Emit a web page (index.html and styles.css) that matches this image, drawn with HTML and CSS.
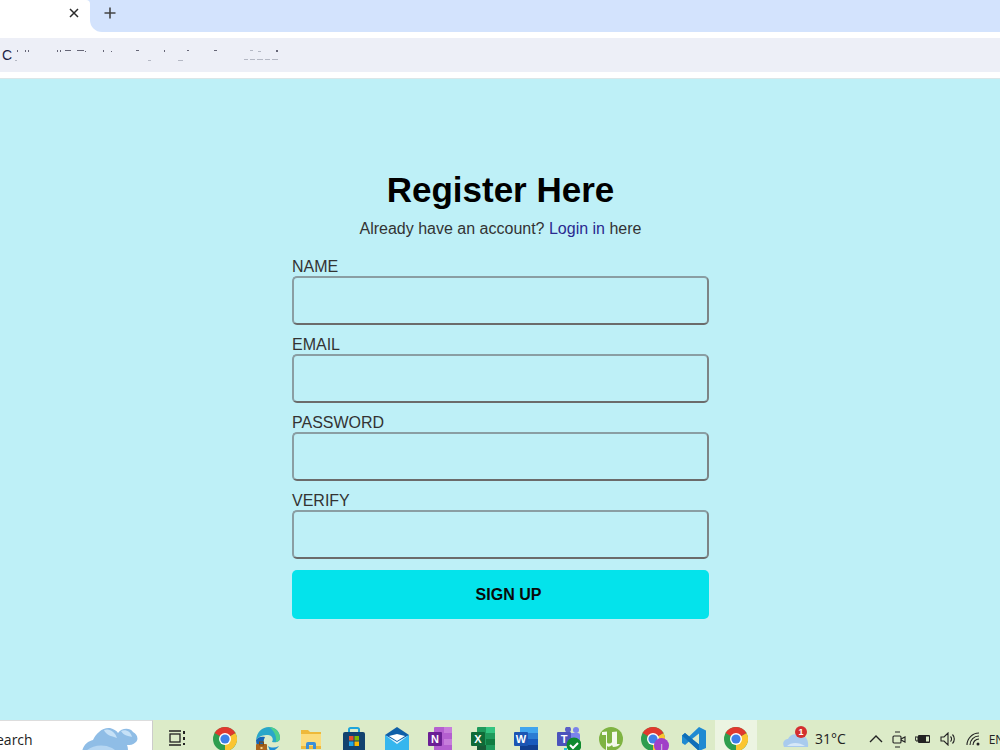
FILE: index.html
```html
<!DOCTYPE html>
<html lang="en">
<head>
    <meta charset="UTF-8">
    <meta name="viewport" content="width=device-width, initial-scale=1.0">
    <title>Register Here</title>
    <link rel="stylesheet" href="styles.css">
</head>
<body>

<div class="tabbar">
    <div class="tab">
        <svg class="tab-close" width="10" height="10" viewBox="0 0 10 10"><path d="M1 1l8 8M9 1l-8 8" stroke="#2a2a2a" stroke-width="1.5"/></svg>
    </div>
    <div class="tab-rest">
        <svg class="tab-plus" width="12" height="12" viewBox="0 0 12 12"><path d="M6 0.5v11M0.5 6h11" stroke="#444" stroke-width="1.6"/></svg>
    </div>
</div>

<div class="addressbar">
    <span class="address-text">C</span>
    <svg class="address-marks" width="272" height="14" viewBox="0 0 272 14">
        <g fill="#667">
            <rect x="8" y="1" width="1" height="2"/><rect x="16" y="1" width="1" height="2"/><rect x="19" y="1" width="1" height="2"/>
            <rect x="48" y="1" width="1" height="2"/><rect x="51" y="1" width="1" height="2"/>
            <rect x="56" y="1" width="6" height="1"/><rect x="68" y="1" width="7" height="1"/><rect x="76" y="2" width="1" height="1"/>
            <rect x="94" y="1" width="1" height="2"/><rect x="102" y="2" width="1" height="1"/>
            <rect x="127" y="1" width="3" height="1"/><rect x="155" y="1" width="1" height="2"/>
            <rect x="178" y="1" width="2" height="1"/><rect x="205" y="1" width="3" height="1"/><rect x="267" y="1" width="2" height="2"/>
        </g>
        <g fill="#b4b8c4">
            <rect x="6" y="11" width="2" height="1"/><rect x="139" y="11" width="3" height="1"/><rect x="169" y="11" width="5" height="1"/>
            <rect x="241" y="1" width="3" height="1"/><rect x="249" y="2" width="3" height="1"/>
            <path d="M235 10h4v1h-4zM241 10h5v1h-5zM248 10h6v1h-6zM256 10h5v1h-5zM263 10h6v1h-6z"/>
        </g>
    </svg>
</div>

<main class="page">
    <form class="register-form">
        <h1>Register Here</h1>
        <p class="subtitle">Already have an account? <a href="#">Login in</a> here</p>

        <label for="name">NAME</label>
        <input type="text" id="name">

        <label for="email">EMAIL</label>
        <input type="text" id="email">

        <label for="password">PASSWORD</label>
        <input type="password" id="password">

        <label for="verify">VERIFY</label>
        <input type="password" id="verify">

        <button type="button" class="signup">SIGN UP</button>
    </form>
</main>

<footer class="taskbar">
    <svg width="0" height="0" class="defs">
        <symbol id="chrome" viewBox="0 0 24 24">
            <circle cx="12" cy="12" r="12" fill="#2f9e4f"/>
            <path d="M12 12L22.4 6A12 12 0 0 1 12 24z" fill="#fbc531"/>
            <path d="M12 12L1.6 6A12 12 0 0 1 22.4 6z" fill="#e0382e"/>
            <circle cx="12" cy="12" r="6" fill="#fff"/>
            <circle cx="12" cy="12" r="4.6" fill="#3f7fe8"/>
        </symbol>
    </svg>

    <div class="search">
        <span class="search-text">earch</span>
        <svg class="search-cloud" width="56" height="25" viewBox="0 0 56 25">
            <path d="M0 25C1 18 6 14 11 13C14 6 21 0 28 1C32 2 35 4 36 6C39 1 48 0 51 5C55 7 57 12 54 15C51 18 48 18 45 18C46 20 46 23 46 25z" fill="#8fbde6"/>
            <path d="M22 3C28 1 33 5 35 11C29 9 24 8 22 3z" fill="#c6e1f7"/>
            <path d="M39 4C44 2 49 5 50 10C46 9 41 8 39 4z" fill="#c6e1f7"/>
            <path d="M3 25C8 19 20 16 30 21L36 25z" fill="#b5d6f2"/>
        </svg>
    </div>

    <div class="task-icons">
        <div class="task-icon task-view">
            <svg width="18" height="18" viewBox="0 0 18 18" fill="none" stroke="#222" stroke-width="1.3">
                <rect x="2" y="5" width="10" height="8"/>
                <path d="M1 2h12M1 16h12"/>
                <path d="M16 2v3M16 8v3M16 14v2" stroke-width="2"/>
            </svg>
        </div>
        <div class="task-icon"><svg class="icon"><use href="#chrome"/></svg></div>
        <div class="task-icon">
            <svg class="icon" viewBox="0 0 24 24">
                <path d="M0 13C1 5 6 0 13 0C20 0 24 5 24 11C24 15 20 16 16 15C18 12 16 8 12 8C7 8 3 9 0 13z" fill="#2aa7c9"/>
                <path d="M13 0C19 0 24 5 24 11C24 13 22 14.500 20 15C21 10 18 3 13 0z" fill="#4fd08a"/>
                <path d="M0 13C0 19 3 23 8 24L14 24C8 22 6 15 9 10C5 9 2 10 0 13z" fill="#1565b8"/>
                <path d="M14 24C18 24 21 22 23 19C19 21 15 21 12 19z" fill="#1f8fd6"/>
                <rect x="0" y="17" width="11" height="8" rx="1" fill="#a9651f"/>
                <rect x="3.500" y="15" width="4" height="3" fill="none" stroke="#7c4a14"/>
                <rect x="4.500" y="20" width="2" height="2" fill="#f4d58d"/>
            </svg>
        </div>
        <div class="task-icon">
            <svg class="icon folder" viewBox="0 0 20 19">
                <path d="M0 0h7l2 2h11v17H0z" fill="#eeb93a"/>
                <path d="M0 4h20v12H0z" fill="#fbdc7c"/>
                <path d="M5 19v-5a2 2 0 0 1 2-2h6a2 2 0 0 1 2 2v5h-3v-4H8v4z" fill="#3b8fd8"/>
            </svg>
        </div>
        <div class="task-icon">
            <svg class="icon" viewBox="0 0 24 24">
                <path d="M7 5V2.500A1.500 1.500 0 0 1 8.500 1h7A1.500 1.500 0 0 1 17 2.500V5" fill="none" stroke="#1ea5dc" stroke-width="2"/>
                <rect x="1" y="5" width="22" height="20" rx="2" fill="#12426f"/>
                <rect x="7" y="9" width="4.500" height="4.500" fill="#e8502c"/>
                <rect x="12.500" y="9" width="4.500" height="4.500" fill="#7fba00"/>
                <rect x="7" y="14.500" width="4.500" height="4.500" fill="#1ea5e8"/>
                <rect x="12.500" y="14.500" width="4.500" height="4.500" fill="#fbb900"/>
            </svg>
        </div>
        <div class="task-icon">
            <svg class="icon" viewBox="0 0 24 24">
                <path d="M12 0L24 8V25H0V8z" fill="#0f5fa8"/>
                <path d="M0 8L12 15L24 8V25H0z" fill="#35b6ee"/>
                <path d="M4 9L12 7L20 9L12 14z" fill="#fff"/>
                <path d="M0 8L12 15L24 8L12 17z" fill="#dff1fb"/>
            </svg>
        </div>
        <div class="task-icon">
            <svg class="icon" viewBox="0 0 24 24">
                <rect x="6" y="0" width="18" height="25" rx="1" fill="#b45fd0"/>
                <path d="M16 0h8v6h-8zM16 12h8v6h-8z" fill="#c77ddc"/>
                <rect x="0" y="5" width="14" height="14" rx="1" fill="#6b1f95"/>
                <text x="7" y="16" class="icon-letter" text-anchor="middle">N</text>
            </svg>
        </div>
        <div class="task-icon">
            <svg class="icon" viewBox="0 0 24 24">
                <rect x="6" y="0" width="18" height="25" rx="1" fill="#1f9a5c"/>
                <path d="M15 0h9v6h-9z" fill="#33c481"/>
                <path d="M15 12h9v6h-9z" fill="#107c41"/>
                <path d="M6 18h9v7H6z" fill="#185c37"/>
                <rect x="0" y="5" width="14" height="14" rx="1" fill="#0f6b38"/>
                <text x="7" y="16" class="icon-letter" text-anchor="middle">X</text>
            </svg>
        </div>
        <div class="task-icon">
            <svg class="icon" viewBox="0 0 24 24">
                <rect x="6" y="0" width="18" height="25" rx="1" fill="#2b7cd3"/>
                <path d="M6 0h18v6H6z" fill="#41a5ee"/>
                <path d="M6 12h18v6H6z" fill="#185abd"/>
                <path d="M6 18h18v7H6z" fill="#103f91"/>
                <rect x="0" y="5" width="14" height="14" rx="1" fill="#1b55b3"/>
                <text x="7" y="16" class="icon-letter" text-anchor="middle">W</text>
            </svg>
        </div>
        <div class="task-icon">
            <svg class="icon" viewBox="0 0 24 24">
                <circle cx="19" cy="3" r="3" fill="#7b83eb"/>
                <circle cx="11" cy="2.500" r="3" fill="#5b5fc7"/>
                <rect x="10" y="6" width="13" height="12" rx="2" fill="#7b83eb"/>
                <rect x="0" y="5" width="14" height="14" rx="1" fill="#4b53bc"/>
                <text x="7" y="16" class="icon-letter" text-anchor="middle">T</text>
                <circle cx="17" cy="18" r="7.500" fill="#0f8a2e"/>
                <path d="M13 18l3 3 5-5" fill="none" stroke="#fff" stroke-width="2"/>
                <rect x="7" y="21" width="3" height="4" fill="#19c3d6"/>
            </svg>
        </div>
        <div class="task-icon narrow">
            <svg class="icon" viewBox="0 0 24 24">
                <circle cx="12" cy="12" r="12" fill="#7fb342"/>
                <path d="M3 5l5-.500V15c0 2 4 2 5 0V5l5-.500V17l3 0c-1 2-4 3-7 3l-1-2c-2 2-4 2-5 1v5H7V8L3 8z" fill="#f4f9ec"/>
            </svg>
        </div>
        <div class="task-icon narrow">
            <svg class="icon"><use href="#chrome"/></svg>
            <span class="avatar">J</span>
        </div>
        <div class="task-icon narrow">
            <svg class="icon" viewBox="0 0 24 24">
                <path d="M17 0L24 3.500V21L17 24L7 14.500L3 18L0 16V8.500L3 6L7 9.500z" fill="#1f8ad2"/>
                <path d="M17 6.500L10 12L17 17.500z" fill="#dcebc8"/>
                <path d="M0 8.500L3 6L17 17.500V24z" fill="#0f6fb8"/>
            </svg>
        </div>
        <div class="task-icon narrow active"><svg class="icon"><use href="#chrome"/></svg></div>
    </div>

    <div class="weather">
        <svg width="26" height="22" viewBox="0 0 26 22">
            <path d="M1 21C-1 17 1 13 5 13C7 8 13 7 17 10C22 9 26 13 25 21z" fill="#a9cbee"/>
            <path d="M4 20C8 16 16 16 22 20z" fill="#d6e8f8"/>
            <circle cx="18" cy="6" r="6" fill="#d32f2f"/>
            <text x="18" y="9" class="badge-num" text-anchor="middle">1</text>
        </svg>
        <span class="temp">31°C</span>
    </div>

    <div class="tray">
        <svg width="14" height="8" viewBox="0 0 14 8" fill="none" stroke="#222" stroke-width="1.4"><path d="M1 7l6-6 6 6"/></svg>
        <svg width="14" height="18" viewBox="0 0 14 18" fill="none" stroke="#222" stroke-width="1.1">
            <rect x="1" y="6" width="8" height="7" rx="1"/>
            <path d="M9 9l4-2v5l-4-2M3 2h5M3 17h5"/>
        </svg>
        <svg width="16" height="12" viewBox="0 0 16 12">
            <rect x="3" y="2" width="12" height="8" rx="1" fill="#222"/>
            <rect x="11" y="3.500" width="3" height="5" fill="#dcebc8"/>
            <path d="M0 4h3v4H1z" fill="none" stroke="#222"/>
        </svg>
        <svg width="16" height="14" viewBox="0 0 16 14" fill="none" stroke="#222" stroke-width="1.1">
            <path d="M1 5h3l4-4v12L4 9H1zM10.500 4.500a3.500 3.500 0 0 1 0 5M12.500 2.500a6.500 6.500 0 0 1 0 9" />
        </svg>
        <svg class="wifi" width="14" height="14" viewBox="0 0 14 14" fill="none" stroke="#222" stroke-width="1.1">
            <path d="M1 13A12 12 0 0 1 13 1M4 13A9 9 0 0 1 13 4M7 13A6 6 0 0 1 13 7"/>
            <circle cx="12" cy="12" r="1.500" fill="#222" stroke="none"/>
        </svg>
        <span class="lang">EN</span>
    </div>
</footer>

</body>
</html>
```

FILE: styles.css
```css
html, body {
    margin: 0;
    padding: 0;
}
body {
    width: 1000px;
    height: 750px;
    overflow: hidden;
    display: flex;
    flex-direction: column;
    font-family: "Liberation Sans", Arial, sans-serif;
    background: #fff;
    color: #333;
}

/* browser chrome */
.tabbar {
    display: flex;
    height: 32px;
    flex: none;
    background: linear-gradient(#d3e3fd, #d3e3fd) 0 0 / 100% 6px no-repeat, #fff;
}
.tab {
    width: 90px;
    background: #fff;
    border-top-right-radius: 4px;
    display: flex;
    justify-content: flex-end;
}
.tab-close {
    margin: 8px 11px 0 0;
}
.tab-rest {
    flex: 1;
    background: #d3e3fd;
    border-bottom-left-radius: 12px;
    padding: 7px 0 0 14px;
}
.tab-plus {
    display: block;
}
.addressbar {
    height: 34px;
    margin-top: 6px;
    flex: none;
    display: flex;
    align-items: center;
    padding-left: 2px;
    background: #edeff7;
}
.address-text {
    font-size: 14px;
    color: #224;
    line-height: 34px;
}
.address-marks {
    margin: 2px 0 0 -3px;
}

/* page */
.page {
    flex: none;
    height: 642px;
    margin-top: 6px;
    background: #bef0f7;
    border-top: 1px solid #dbe6e8;
    box-sizing: border-box;
}
.register-form {
    width: 417px;
    margin: 0 auto;
    padding-top: 91px;
    padding-left: 1px;
}
h1 {
    margin: 0;
    font-size: 35px;
    line-height: 40px;
    text-align: center;
    color: #000;
}
.subtitle {
    margin: 10px 0 20px;
    font-size: 16px;
    line-height: 18px;
    text-align: center;
}
.subtitle a {
    color: #2a2a90;
    text-decoration: none;
}
label {
    display: block;
    font-size: 16px;
    line-height: 18px;
}
input {
    display: block;
    width: 100%;
    height: 49px;
    box-sizing: border-box;
    margin: 0 0 11px;
    background: transparent;
    border: 2px solid #8a9ea3;
    border-bottom-color: #6b6b6b;
    border-right-color: #7d8486;
    border-radius: 5px;
}
.signup {
    display: block;
    width: 100%;
    height: 49px;
    padding-left: 22px;
    border: 0;
    border-radius: 5px;
    background: #04e3eb;
    color: #0a0a0a;
    font-family: inherit;
    font-size: 16px;
    font-weight: bold;
}

/* windows taskbar */
.taskbar {
    flex: none;
    height: 30px;
    display: flex;
    background: #dcebc8;
    overflow: hidden;
    font-family: "Open Sans", sans-serif;
}
.defs {
    position: absolute;
}
.search {
    width: 153px;
    flex: none;
    display: flex;
    justify-content: space-between;
    box-sizing: border-box;
    padding-right: 14px;
    background: #fff;
    border-top: 1px solid #ddd;
    border-right: 1px solid #ccc;
    overflow: hidden;
}
.search-text {
    margin-left: -4px;
    margin-top: 9px;
    font-size: 14px;
    line-height: 20px;
    color: #222;
}
.search-cloud {
    margin-top: 6px;
}
.task-icons {
    display: flex;
}
.task-icon {
    position: relative;
    width: 43px;
    display: flex;
    justify-content: center;
    padding-top: 7px;
    box-sizing: border-box;
}
.task-icon.narrow {
    width: 41.6px;
}
.task-view {
    width: 50.5px;
    padding: 9px 2.5px 0 0;
}
.task-icon.active {
    background: #ecf4e2;
}
.icon {
    display: block;
    width: 24px;
    height: 24px;
}
.icon.folder {
    width: 20px;
    height: 19px;
    margin-top: 3px;
}
.icon-letter {
    font: bold 11px "Liberation Sans", sans-serif;
    fill: #fff;
}
.avatar {
    position: absolute;
    left: 22px;
    top: 18px;
    width: 15px;
    height: 15px;
    border-radius: 50%;
    background: #a040c8;
    color: #eee;
    font-size: 8px;
    line-height: 15px;
    text-align: center;
}
.weather {
    display: flex;
    align-items: flex-start;
    gap: 6px;
    margin-left: 26px;
    padding-top: 6px;
}
.badge-num {
    font: bold 9px "Liberation Sans", sans-serif;
    fill: #fff;
}
.temp {
    font-size: 14px;
    line-height: 26px;
    color: #222;
}
.tray {
    display: flex;
    align-items: center;
    gap: 9px;
    margin-left: 23px;
    height: 38px;
}
.wifi {
    margin-left: 1px;
}
.lang {
    font-size: 12px;
    color: #222;
}
```
